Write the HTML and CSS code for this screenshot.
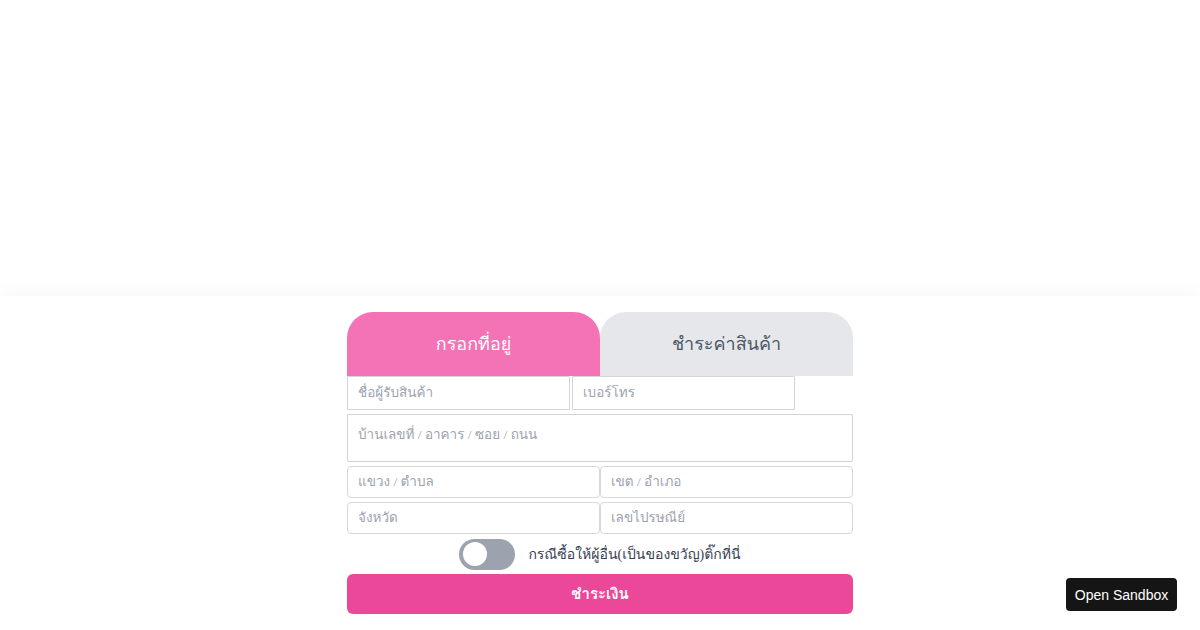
FILE: index.html
```html
<!DOCTYPE html>
<html lang="th">
<head>
<meta charset="utf-8">
<title>Checkout</title>
<link rel="stylesheet" href="styles.css">
</head>
<body>
<div class="top"></div>
<section class="panel">
  <form class="form">
    <div class="tabs">
      <div class="tab active">กรอกที่อยู่</div>
      <div class="tab">ชำระค่าสินค้า</div>
    </div>
    <div class="row row-first">
      <input class="field sq w223" type="text" placeholder="ชื่อผู้รับสินค้า">
      <input class="field sq w223" type="text" placeholder="เบอร์โทร">
    </div>
    <textarea class="field sq area" placeholder="บ้านเลขที่ / อาคาร / ซอย / ถนน"></textarea>
    <div class="row half">
      <input class="field rd" type="text" placeholder="แขวง / ตำบล">
      <input class="field rd" type="text" placeholder="เขต / อำเภอ">
    </div>
    <div class="row half">
      <input class="field rd" type="text" placeholder="จังหวัด">
      <input class="field rd" type="text" placeholder="เลขไปรษณีย์">
    </div>
    <label class="gift">
      <span class="switch"><span class="knob"></span></span>
      <span class="gift-text">กรณีซื้อให้ผู้อื่น(เป็นของขวัญ)ติ๊กที่นี่</span>
    </label>
    <button type="button" class="pay">ชำระเงิน</button>
  </form>
</section>
<a class="sandbox">Open Sandbox</a>
</body>
</html>
```

FILE: styles.css
```css
* { box-sizing: border-box; }
html, body { margin: 0; padding: 0; background: #fff; }
body {
  font-family: "Liberation Serif", "Norasi", "Kinnari", "Laksaman", "Garuda", "Loma", "Noto Serif Thai", "Noto Sans Thai Looped", serif;
  width: 1200px;
  height: 630px;
  overflow: hidden;
}
.top { height: 296px; background: #fff; }
.panel {
  background: #fff;
  box-shadow: 0 -8px 14px rgba(0, 0, 0, 0.025);
  padding-top: 16px;
  height: 334px;
}
.form {
  width: 506px;
  margin: 0 auto;
  display: flex;
  flex-direction: column;
}
.tabs { display: flex; height: 64px; }
.tab {
  flex: 1;
  display: flex;
  align-items: center;
  justify-content: center;
  border-radius: 26px 26px 0 0;
  background: #e5e7eb;
  color: #4b5563;
  font-size: 18px;
  padding-bottom: 1px;
}
.tab.active { background: #f472b6; color: #fff; }
.row { display: flex; gap: 2px; }
.field {
  font-family: inherit;
  font-size: 13.5px;
  color: #374151;
  background: #fff;
  border: 1px solid #d1d5db;
  padding: 0 10px;
  margin: 0;
  outline: none;
}
.field::placeholder { color: #9ca3af; }
.sq { border-radius: 1px; }
.w223 { width: 223px; height: 34px; }
.area {
  width: 506px;
  height: 48px;
  margin-top: 4px;
  padding-top: 8px;
  resize: none;
  display: block;
}
.half { margin-top: 4px; gap: 0; }
.rd {
  width: 253px;
  height: 32px;
  border-radius: 4px;
  border-color: #d8d8da;
}
.gift {
  height: 40px;
  display: flex;
  align-items: center;
  justify-content: center;
  gap: 13px;
}
.switch {
  width: 56px;
  height: 31px;
  border-radius: 16px;
  background: #9ca3af;
  display: flex;
  align-items: center;
  padding-left: 4px;
}
.knob {
  width: 24px;
  height: 24px;
  border-radius: 50%;
  background: #fff;
}
.gift-text { font-size: 14px; color: #374151; }
.pay {
  height: 40px;
  border: none;
  border-radius: 6px;
  background: #ec4899;
  color: #fff;
  font-family: inherit;
  font-weight: bold;
  font-size: 15px;
  width: 506px;
}
.sandbox {
  position: fixed;
  right: 23px;
  bottom: 19px;
  width: 111px;
  height: 33px;
  background: #151515;
  color: #fff;
  border-radius: 4px;
  font-family: "Liberation Sans", Arial, sans-serif;
  font-size: 14px;
  display: flex;
  align-items: center;
  justify-content: center;
}
```
